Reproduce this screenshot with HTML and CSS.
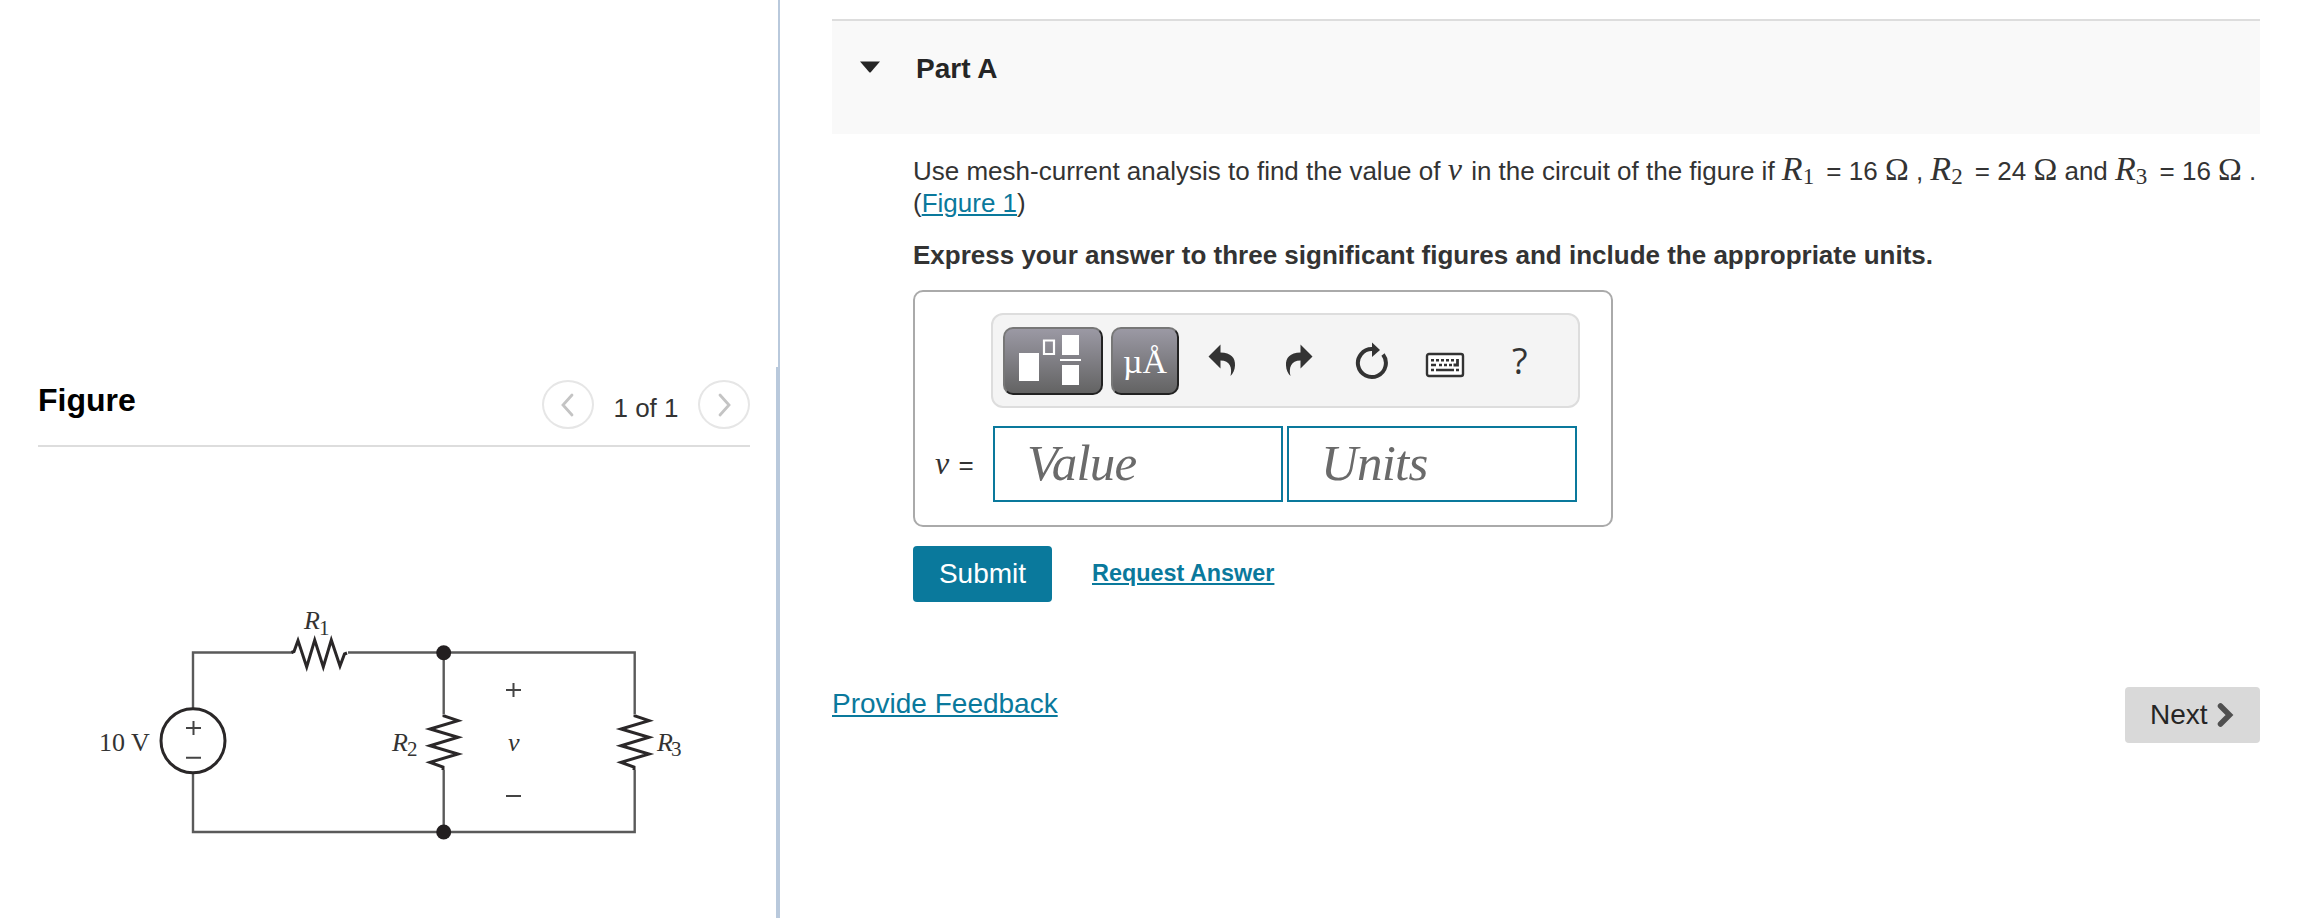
FILE: index.html
```html
<!DOCTYPE html>
<html lang="en">
<head>
  <meta charset="UTF-8">
  <meta name="viewport" content="width=device-width, initial-scale=1.0">
  <title>Part A</title>
  <link rel="stylesheet" href="styles.css">
</head>
<body>

<div class="page">
  <aside class="left-pane">
    <div class="left-top"></div>
    <section class="figure-panel">
      <div class="figure-header">
        <h2>Figure</h2>
        <div class="pager">
          <button class="round-btn" aria-label="Previous">
            <svg width="14" height="24" viewBox="0 0 14 24"><path d="M11 2L2 12l9 10"/></svg>
          </button>
          <span class="page-count">1 of 1</span>
          <button class="round-btn" aria-label="Next figure">
            <svg width="14" height="24" viewBox="0 0 14 24"><path d="M3 2l9 10-9 10"/></svg>
          </button>
        </div>
      </div>

      <svg class="circuit" width="620" height="260" viewBox="80 590 620 260">
        <!-- wires -->
        <g class="wire">
          <path d="M193 709V652.5H293"/>
          <path d="M348 652.5H634.7V714"/>
          <path d="M443.7 652.5V714"/>
          <path d="M443.7 770V832"/>
          <path d="M193 773V832H634.7V770"/>
        </g>
        <!-- resistors -->
        <g class="resistor">
          <path d="M291.500 652.500L294 651.500L298 640.500L306.700 667L314.700 640L323.300 667L331.300 640L340 666L344.500 654L347 653"/>
          <path d="M444 714.500V716L458 720.700L430 729L458 737.300L430 745.700L458 754L430 762.300L443 767V770"/>
          <path d="M635 714.500V716L649 720.700L621 729L649 737.300L621 745.700L649 754L621 762.300L634 767V770"/>
        </g>
        <circle class="source" cx="193" cy="740.700" r="32"/>
        <circle cx="443.700" cy="652.700" r="7.500" fill="#231f20"/>
        <circle cx="443.700" cy="832" r="7.500" fill="#231f20"/>
        <g class="sign">
          <path d="M186 728h15M193.500 721v14M186 757.700h15"/>
          <path d="M506 690h15M513.500 683v14M506 796h15"/>
        </g>
        <g class="label">
          <text x="99" y="751">10 V</text>
          <text x="304" y="629" class="it">R</text><text x="319" y="635" class="sub">1</text>
          <text x="392" y="751" class="it">R</text><text x="407" y="756" class="sub">2</text>
          <text x="657" y="751" class="it">R</text><text x="671" y="756" class="sub">3</text>
          <text x="508" y="751" class="it">v</text>
        </g>
      </svg>
    </section>
  </aside>

  <main class="content">
    <div class="part-header">
      <svg class="caret" width="22" height="12" viewBox="0 0 22 12"><path d="M1 0.500h20L11.500 11.500h-1z" fill="#252525"/></svg>
      <h2>Part A</h2>
    </div>

    <div class="part-body">
      <p class="question">Use mesh-current analysis to find the value of <i class="math v">v</i> in the circuit of the figure if <i class="math r">R</i><span class="sub">1</span> = 16 <span class="math ohm">Ω</span> , <i class="math r">R</i><span class="sub">2</span> = 24 <span class="math ohm">Ω</span> and <i class="math r">R</i><span class="sub">3</span> = 16 <span class="math ohm">Ω</span> .<br>(<a href="#">Figure 1</a>)</p>
      <p class="instructions">Express your answer to three significant figures and include the appropriate units.</p>

      <div class="answer-box">
        <div class="toolbar">
          <button class="tool-btn templates" aria-label="Templates">
            <svg width="96" height="64" viewBox="0 0 96 64">
              <g fill="#fff">
                <path d="M14 24h20v28H14z"/>
                <path d="M57 6h17v20H57z"/>
                <path d="M55 30h21v2H55z"/>
                <path d="M57 36h17v20H57z"/>
              </g>
              <path d="M39 11.500h10v13.500H39z" fill="none" stroke="#fff" stroke-width="2.200"/>
            </svg>
          </button>
          <button class="tool-btn symbols">µÅ</button>
          <div class="tool-icons">
            <svg width="28" height="34" viewBox="0 0 28 34"><path d="M0.500 12.500L12.500 0.500V8.500C23 8.500 27.500 14 27 21.500C26.800 26 25 29.500 22.500 32C24.500 24 22 16.500 12.500 16.500V24.500z"/></svg>
            <svg width="28" height="34" viewBox="0 0 28 34"><path d="M27.500 12.500L15.500 0.500V8.500C5 8.500 0.500 14 1 21.500C1.200 26 3 29.500 5.500 32C3.500 24 6 16.500 15.500 16.500V24.500z"/></svg>
            <svg width="34" height="38" viewBox="0 0 34 38"><path d="M17 7A14 14 0 1 0 28 12.500" fill="none" stroke="#333" stroke-width="4"/><path d="M17 0.500L25 8L17 15z"/></svg>
            <svg width="40" height="26" viewBox="0 0 40 26">
              <rect x="2" y="2" width="36" height="22" rx="2" fill="#fff" stroke="#333" stroke-width="2.400"/>
              <path d="M6 8.200h3M11 8.200h3M16 8.200h3M21 8.200h3M26 8.200h3M6 13h5M14 13h3M19 13h3M24 13h3M6 18h3M11 18h18M31 18h3" stroke="#333" stroke-width="2.400"/>
              <path d="M32.500 7v6H28.500" fill="none" stroke="#333" stroke-width="2.800"/>
            </svg>
            <span class="help">?</span>
          </div>
        </div>
        <div class="answer-row">
          <label><i>v</i> <span>=</span></label>
          <div class="field">Value</div>
          <div class="field units">Units</div>
        </div>
      </div>

      <div class="actions">
        <button class="submit">Submit</button>
        <a href="#" class="request">Request Answer</a>
      </div>
    </div>

    <div class="footer">
      <a href="#" class="feedback">Provide Feedback</a>
      <button class="next">Next
        <svg width="17" height="26" viewBox="0 0 17 26"><path d="M3.500 4L12.500 13L3.500 22" fill="none" stroke="#505050" stroke-width="5.500" stroke-linecap="round"/></svg>
      </button>
    </div>
  </main>
</div>

</body>
</html>
```

FILE: styles.css
```css
* {
  margin: 0;
  padding: 0;
  box-sizing: border-box;
}

body {
  background: #fff;
  color: #333;
  font-family: "Liberation Sans", Arial, sans-serif;
  font-size: 26px;
}

a {
  color: #0a799c;
  text-decoration-thickness: 2px;
  text-underline-offset: 2px;
}

button {
  font-family: inherit;
  border: none;
  cursor: pointer;
}

svg {
  display: block;
  flex-shrink: 0;
}

.page {
  display: flex;
  height: 918px;
  overflow: hidden;
}

/* left side */
.left-pane {
  width: 780px;
  display: flex;
  flex-direction: column;
}

.left-top {
  height: 367px;
  border-right: 2px solid #b9c9dc;
}

.figure-panel {
  flex: 1;
  border-right: 4px solid #b9c9dc;
  padding: 0 26px 0 38px;
}

.figure-header {
  display: flex;
  justify-content: space-between;
  height: 80px;
  border-bottom: 2px solid #ddd;
}

.figure-header h2 {
  font-size: 32px;
  line-height: 36px;
  padding-top: 15px;
  color: #000;
}

.pager {
  display: flex;
  align-items: flex-start;
  padding-top: 13px;
}

.round-btn {
  width: 52px;
  height: 49px;
  border: 2px solid #e6e6e6;
  border-radius: 50%;
  background: #fff;
  display: flex;
  align-items: center;
  justify-content: center;
}

.round-btn path {
  fill: none;
  stroke: #c4c4c4;
  stroke-width: 2.8;
  stroke-linecap: round;
}

.page-count {
  width: 104px;
  text-align: center;
  line-height: 30px;
  padding-top: 13px;
}

.circuit {
  margin: 143px 0 0 42px;
}

.wire path {
  fill: none;
  stroke: #5a5a5a;
  stroke-width: 2.4;
}

.resistor path {
  fill: none;
  stroke: #2a2728;
  stroke-width: 3;
}

.source {
  fill: none;
  stroke: #2a2728;
  stroke-width: 3;
}

.sign path {
  stroke: #444;
  stroke-width: 2;
}

.label text {
  font-family: "Liberation Serif", "Times New Roman", serif;
  font-size: 26px;
  fill: #333;
}

.label .it {
  font-style: italic;
}

.label .sub {
  font-size: 21px;
}

/* right side */
.content {
  flex: 1;
  padding: 19px 40px 0 52px;
}

.part-header {
  display: flex;
  height: 115px;
  border-top: 2px solid #ddd;
  background: #f9f9f9;
  padding-left: 27px;
}

.caret {
  margin-top: 40px;
}

.part-header h2 {
  font-size: 28px;
  line-height: 32px;
  margin: 32px 0 0 35px;
  color: #252525;
}

.part-body {
  padding-left: 81px;
}

.question {
  padding-top: 18px;
  line-height: 32px;
  white-space: nowrap;
}

.math {
  font-family: "Liberation Serif", "Times New Roman", serif;
  line-height: 1;
}

.math.v {
  font-size: 32px;
  margin-right: 2px;
}

.math.r {
  font-size: 34px;
}

.math.ohm {
  font-size: 32px;
}

.question .sub {
  font-family: "Liberation Serif", "Times New Roman", serif;
  font-size: 23px;
  line-height: 1;
  position: relative;
  top: 4px;
  margin-right: 5px;
}

.instructions {
  font-weight: bold;
  line-height: 32px;
  margin-top: 20px;
}

.answer-box {
  width: 700px;
  height: 237px;
  margin-top: 19px;
  border: 2px solid #aaa;
  border-radius: 10px;
  padding-top: 21px;
}

.toolbar {
  display: flex;
  align-items: center;
  gap: 8px;
  width: 589px;
  height: 95px;
  margin-left: 76px;
  padding-left: 10px;
  border: 2px solid #ddd;
  border-radius: 12px;
  background: #f4f4f4;
}

.tool-btn {
  height: 68px;
  border: 2px solid;
  border-color: #777 #222 #222 #777;
  border-radius: 10px;
  background: linear-gradient(#9b99a4, #636363);
  color: #fff;
}

.templates {
  width: 100px;
}

.symbols {
  width: 68px;
  font-family: "Liberation Serif", "Times New Roman", serif;
  font-size: 34px;
  line-height: 60px;
  padding-top: 3px;
}

.tool-icons {
  display: flex;
  align-items: center;
  margin-left: 21px;
  gap: 49px;
}

.tool-icons path {
  fill: #333;
}

.tool-icons path[fill="none"] {
  fill: none;
}

.tool-icons svg:nth-child(3) {
  margin: 0 -7px 0 -7px;
}

.tool-icons svg:nth-child(4) {
  margin-top: 9px;
  margin-left: -6px;
}

.help {
  font-family: "Open Sans", sans-serif;
  font-size: 36px;
  line-height: 40px;
  margin-left: -2px;
}

.answer-row {
  display: flex;
  align-items: center;
  gap: 4px;
  margin-top: 18px;
}

.answer-row label {
  width: 74px;
  padding-left: 20px;
  font-size: 26px;
  line-height: 30px;
}

.answer-row label i {
  font-family: "Liberation Serif", "Times New Roman", serif;
  font-size: 32px;
  margin-right: 2px;
}

.field {
  width: 290px;
  height: 76px;
  border: 2px solid #0a799c;
  padding-left: 32px;
  font-family: "Liberation Serif", "Times New Roman", serif;
  font-style: italic;
  font-size: 51px;
  line-height: 70px;
  letter-spacing: -0.8px;
  color: #6a6a6a;
}

.actions {
  display: flex;
  margin-top: 19px;
}

.submit {
  width: 139px;
  height: 56px;
  border-radius: 4px;
  background: #0a799c;
  color: #fff;
  font-size: 28px;
}

.request {
  margin: 13px 0 0 40px;
  font-size: 23.4px;
  line-height: 28px;
  font-weight: bold;
}

.footer {
  display: flex;
  justify-content: space-between;
  margin-top: 85px;
}

.feedback {
  font-size: 28px;
  line-height: 34px;
}

.next {
  width: 135px;
  height: 56px;
  border-radius: 4px;
  background: #d9d9d9;
  color: #252525;
  font-size: 28px;
  display: flex;
  align-items: center;
  padding-left: 25px;
  gap: 9px;
}
```
